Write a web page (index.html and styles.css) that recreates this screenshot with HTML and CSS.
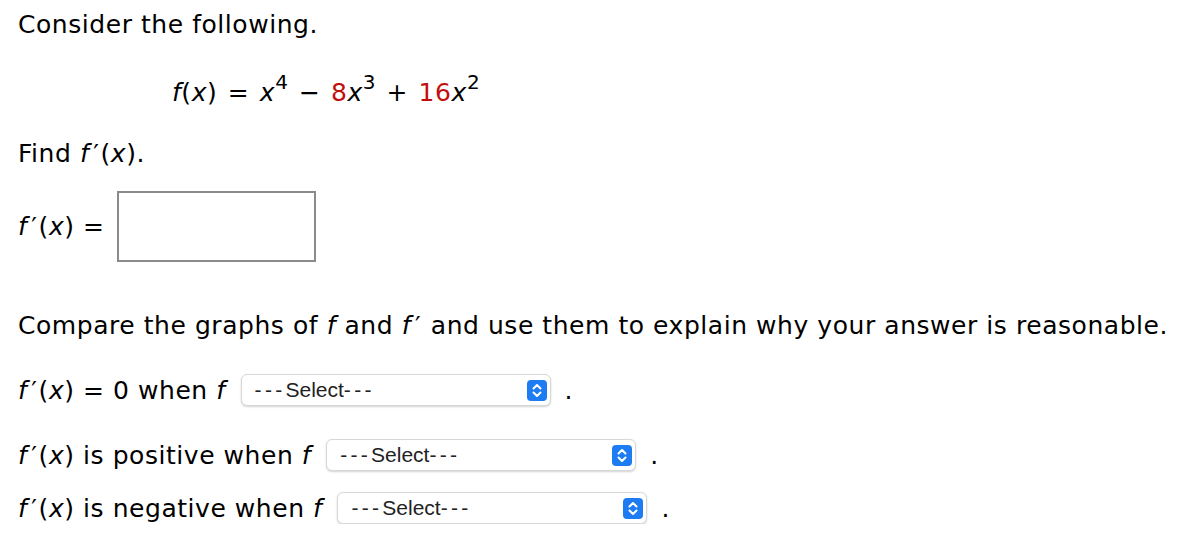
FILE: index.html
```html
<!DOCTYPE html>
<html>
<head>
<meta charset="utf-8">
<link rel="stylesheet" href="styles.css">
</head>
<body>
<div class="page">
  <p class="line first">Consider the following.</p>
  <p class="line eq"><i>f</i>(<i>x</i>) <span class="op">=</span> <i>x</i><sup>4</sup> <span class="op">−</span> <span class="red">8</span><i>x</i><sup>3</sup> <span class="op">+</span> <span class="red">16</span><i>x</i><sup>2</sup></p>
  <p class="line find">Find <i>f</i><span class="pr">′</span>(<i>x</i>).</p>
  <div class="answer-row">
    <span class="line"><i>f</i><span class="pr">′</span>(<i>x</i>) =</span>
    <div class="answer-box"></div>
  </div>
  <p class="line compare">Compare the graphs of <i>f</i> and <i>f</i><span class="pr">′</span> and use them to explain why your answer is reasonable.</p>
  <div class="sel-row r1">
    <span class="line"><i>f</i><span class="pr">′</span>(<i>x</i>) = 0 when <i>f</i></span>
    <div class="select"><span class="sel-text"><span class="hy">---</span>Select<span class="hy">---</span></span><span class="sel-btn"><svg width="20" height="21" viewBox="0 0 20 21"><path d="M6.5 8.5 L10 5 L13.5 8.5 M6.5 12.5 L10 16 L13.5 12.5" fill="none" stroke="#fff" stroke-width="2" stroke-linecap="round" stroke-linejoin="round"/></svg></span></div>
    <span class="line dot">.</span>
  </div>
  <div class="sel-row r2">
    <span class="line"><i>f</i><span class="pr">′</span>(<i>x</i>) is positive when <i>f</i></span>
    <div class="select"><span class="sel-text"><span class="hy">---</span>Select<span class="hy">---</span></span><span class="sel-btn"><svg width="20" height="21" viewBox="0 0 20 21"><path d="M6.5 8.5 L10 5 L13.5 8.5 M6.5 12.5 L10 16 L13.5 12.5" fill="none" stroke="#fff" stroke-width="2" stroke-linecap="round" stroke-linejoin="round"/></svg></span></div>
    <span class="line dot">.</span>
  </div>
  <div class="sel-row r3">
    <span class="line"><i>f</i><span class="pr">′</span>(<i>x</i>) is negative when <i>f</i></span>
    <div class="select"><span class="sel-text"><span class="hy">---</span>Select<span class="hy">---</span></span><span class="sel-btn"><svg width="20" height="21" viewBox="0 0 20 21"><path d="M6.5 8.5 L10 5 L13.5 8.5 M6.5 12.5 L10 16 L13.5 12.5" fill="none" stroke="#fff" stroke-width="2" stroke-linecap="round" stroke-linejoin="round"/></svg></span></div>
    <span class="line dot">.</span>
  </div>
</div>
</body>
</html>
```
FILE: styles.css
```css
html, body {
  margin: 0;
  padding: 0;
  background: #fff;
}
.page {
  padding: 10px 0 0 18px;
  font-family: "DejaVu Sans", Verdana, sans-serif;
  font-size: 25px;
  letter-spacing: 0.55px;
  color: #000;
}
.line {
  margin: 0;
  line-height: 29px;
  white-space: nowrap;
}
i {
  font-style: italic;
}
.pr {
  font-style: normal;
  margin-left: 4px;
  margin-right: 1px;
}
sup {
  font-size: 20px;
  line-height: 0;
  vertical-align: 0.6em;
}
.op {
  margin: 0 2px;
}
.red {
  color: #c40d0d;
}
.eq {
  margin-top: 39px;
  padding-left: 154px;
}
.find {
  margin-top: 32px;
}
.answer-row {
  display: flex;
  align-items: center;
  margin-top: 23px;
}
.answer-box {
  width: 195px;
  height: 67px;
  border: 2px solid #8a8a8a;
  background: #fff;
  margin-left: 12px;
}
.compare {
  margin-top: 49px;
}
.sel-row {
  display: flex;
  align-items: center;
}
.r1 { margin-top: 34px; }
.r2 { margin-top: 33px; }
.r3 { margin-top: 21px; }
.select {
  box-sizing: border-box;
  width: 310px;
  height: 32px;
  margin-left: 15px;
  border: 1px solid #d8d8d8;
  border-radius: 6px;
  box-shadow: 0 1px 2px rgba(0,0,0,0.18);
  background: #fff;
  display: flex;
  align-items: center;
  justify-content: space-between;
  padding: 0 3px 0 13px;
  letter-spacing: 0;
}
.sel-text {
  font-family: "Liberation Sans", Arial, sans-serif;
  font-size: 21px;
  color: #222;
}
.hy {
  letter-spacing: 3.3px;
}
.sel-btn {
  width: 20px;
  height: 21px;
  border-radius: 4px;
  background: #1e7cf2;
  display: flex;
}
.dot {
  margin-left: 14px;
}
```
